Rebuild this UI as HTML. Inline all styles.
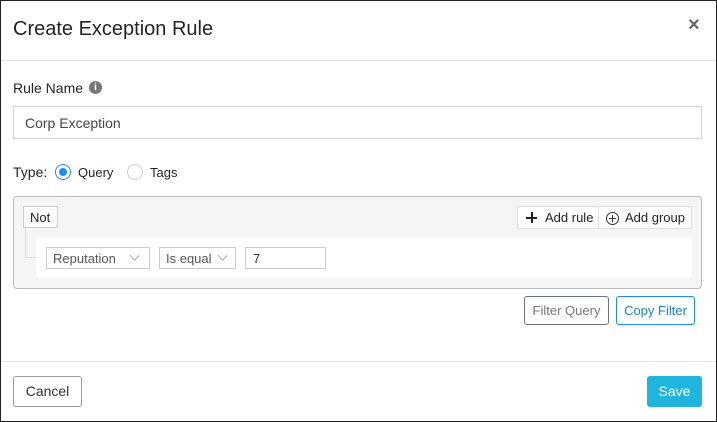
<!DOCTYPE html><html><head><style>
*{box-sizing:border-box;margin:0;padding:0}
body{width:717px;height:422px;background:#fff;font-family:"Liberation Sans",sans-serif;color:#212529;position:relative;overflow:hidden;font-size:13px}
.frame{position:absolute;left:0;top:0;width:717px;height:422px;border:1px solid #222;}
.a{position:absolute}
.chev{position:absolute;top:7px;width:7px;height:7px;border-right:1px solid #aaa;border-bottom:1px solid #aaa;transform:rotate(45deg) scaleX(1.1)}
</style></head><body>
<div class="frame"></div>
<div class="a" style="left:13px;top:18px;font-size:20px;color:#212529">Create Exception Rule</div>
<div class="a" style="left:688px;top:14px;font-size:20px;font-weight:bold;color:#666">×</div>
<div class="a" style="left:1px;top:60px;width:715px;height:1px;background:#e3e3e3"></div>
<div class="a" style="left:13px;top:80px;font-size:14px">Rule Name</div>
<div class="a" style="left:89px;top:81px;width:13px;height:13px;border-radius:50%;background:#777;color:#fff;font-size:10px;font-weight:bold;text-align:center;line-height:13px">i</div>
<div class="a" style="left:13px;top:106px;width:689px;height:33px;border:1px solid #ced4da;padding:8px 11px;font-size:14px;color:#444">Corp Exception</div>
<div class="a" style="left:13px;top:164px;font-size:14px">Type:</div>
<div class="a" style="left:55px;top:164px;width:16px;height:16px;border:1px solid #1a8cff;border-radius:50%"><div style="margin:3px;width:8px;height:8px;border-radius:50%;background:#1a8cff"></div></div>
<div class="a" style="left:78px;top:165px;font-size:13px">Query</div>
<div class="a" style="left:127px;top:164px;width:16px;height:16px;border:1px solid #ccc;border-radius:50%"></div>
<div class="a" style="left:150px;top:165px;font-size:13px">Tags</div>
<div class="a" style="left:13px;top:196px;width:689px;height:93px;border:1px solid #bbb;border-radius:4px;background:#f5f5f5"></div>
<div class="a" style="left:23px;top:206px;width:35px;height:22px;border:1px solid #ccc;background:#fff;font-size:13px;padding:3px 6px">Not</div>
<div class="a" style="left:25px;top:228px;width:12px;height:30px;border-left:1px solid #ddd;border-bottom:1px solid #ddd"></div>
<div class="a" style="left:36px;top:237px;width:656px;height:41px;background:#fff;border-radius:3px"></div>
<div class="a" style="left:46px;top:247px;width:104px;height:22px;border:1px solid #ccc;font-size:13px;color:#555;padding:3px 6px">Reputation<span class="chev" style="left:84px;top:4px"></span></div>
<div class="a" style="left:159px;top:247px;width:77px;height:22px;border:1px solid #ccc;font-size:13px;color:#555;padding:3px 6px">Is equal<span class="chev" style="left:59px;top:4px"></span></div>
<div class="a" style="left:245px;top:247px;width:81px;height:22px;border:1px solid #ccc;font-size:13px;color:#333;padding:3px 7px">7</div>
<div class="a" style="left:517px;top:206px;width:175px;height:23px;border:1px solid #ddd;background:#fff"></div>
<div class="a" style="left:598px;top:206px;width:1px;height:23px;background:#ddd"></div>
<div class="a" style="left:526px;top:217px;width:11px;height:1.5px;background:#222"></div>
<div class="a" style="left:531px;top:212px;width:1.5px;height:11px;background:#222"></div>
<div class="a" style="left:545px;top:210px;font-size:13px">Add rule</div>
<div class="a" style="left:606px;top:212px;width:13px;height:13px;border:1px solid #333;border-radius:50%"></div>
<div class="a" style="left:609px;top:218px;width:7px;height:1px;background:#333"></div>
<div class="a" style="left:612px;top:215px;width:1px;height:7px;background:#333"></div>
<div class="a" style="left:625px;top:210px;font-size:13px">Add group</div>
<div class="a" style="left:524px;top:296px;width:85px;height:29px;border:1px solid #6c757d;border-radius:3px;color:#777;font-size:13px;text-align:center;line-height:27px">Filter Query</div>
<div class="a" style="left:616px;top:296px;width:79px;height:29px;border:1px solid #1a8cff;border-radius:3px;color:#1a7ee6;font-size:13px;text-align:center;line-height:27px">Copy Filter</div>
<div class="a" style="left:1px;top:361px;width:715px;height:1px;background:#e3e3e3"></div>
<div class="a" style="left:13px;top:376px;width:69px;height:31px;border:1px solid #999;border-radius:3px;font-size:14px;text-align:center;line-height:29px;color:#333">Cancel</div>
<div class="a" style="left:647px;top:376px;width:55px;height:31px;background:#1fb5dc;border-radius:3px;color:#fff;font-size:14px;text-align:center;line-height:31px">Save</div>
</body></html>
